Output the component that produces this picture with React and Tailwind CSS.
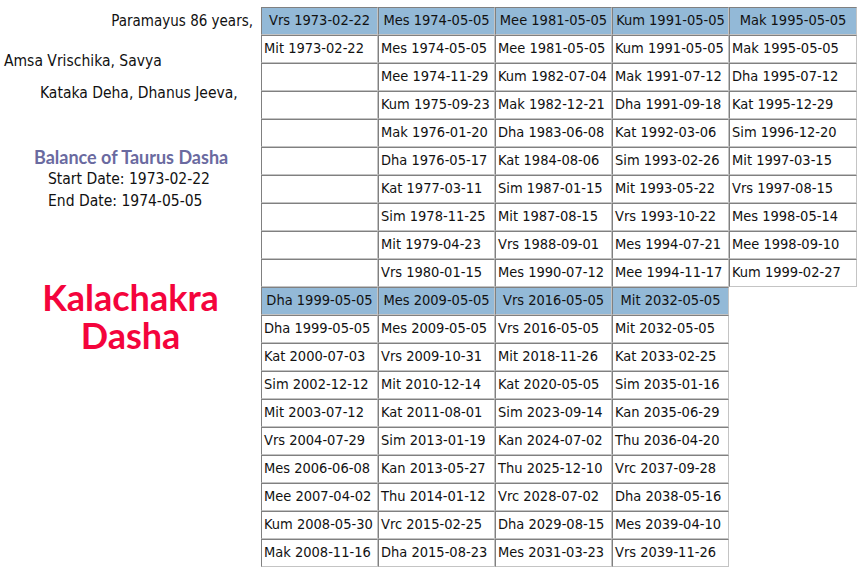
import React from 'react';

const tahoma = { fontFamily: '"DejaVu Sans Condensed", "DejaVu Sans", sans-serif', fontStretch: 'condensed' };

const topTable = {
  heads: ['Vrs 1973-02-22', 'Mes 1974-05-05', 'Mee 1981-05-05', 'Kum 1991-05-05', 'Mak 1995-05-05'],
  cols: [
    ['Mit 1973-02-22', '', '', '', '', '', '', '', ''],
    ['Mes 1974-05-05', 'Mee 1974-11-29', 'Kum 1975-09-23', 'Mak 1976-01-20', 'Dha 1976-05-17', 'Kat 1977-03-11', 'Sim 1978-11-25', 'Mit 1979-04-23', 'Vrs 1980-01-15'],
    ['Mee 1981-05-05', 'Kum 1982-07-04', 'Mak 1982-12-21', 'Dha 1983-06-08', 'Kat 1984-08-06', 'Sim 1987-01-15', 'Mit 1987-08-15', 'Vrs 1988-09-01', 'Mes 1990-07-12'],
    ['Kum 1991-05-05', 'Mak 1991-07-12', 'Dha 1991-09-18', 'Kat 1992-03-06', 'Sim 1993-02-26', 'Mit 1993-05-22', 'Vrs 1993-10-22', 'Mes 1994-07-21', 'Mee 1994-11-17'],
    ['Mak 1995-05-05', 'Dha 1995-07-12', 'Kat 1995-12-29', 'Sim 1996-12-20', 'Mit 1997-03-15', 'Vrs 1997-08-15', 'Mes 1998-05-14', 'Mee 1998-09-10', 'Kum 1999-02-27'],
  ],
};

const bottomTable = {
  heads: ['Dha 1999-05-05', 'Mes 2009-05-05', 'Vrs 2016-05-05', 'Mit 2032-05-05'],
  cols: [
    ['Dha 1999-05-05', 'Kat 2000-07-03', 'Sim 2002-12-12', 'Mit 2003-07-12', 'Vrs 2004-07-29', 'Mes 2006-06-08', 'Mee 2007-04-02', 'Kum 2008-05-30', 'Mak 2008-11-16'],
    ['Mes 2009-05-05', 'Vrs 2009-10-31', 'Mit 2010-12-14', 'Kat 2011-08-01', 'Sim 2013-01-19', 'Kan 2013-05-27', 'Thu 2014-01-12', 'Vrc 2015-02-25', 'Dha 2015-08-23'],
    ['Vrs 2016-05-05', 'Mit 2018-11-26', 'Kat 2020-05-05', 'Sim 2023-09-14', 'Kan 2024-07-02', 'Thu 2025-12-10', 'Vrc 2028-07-02', 'Dha 2029-08-15', 'Mes 2031-03-23'],
    ['Mit 2032-05-05', 'Kat 2033-02-25', 'Sim 2035-01-16', 'Kan 2035-06-29', 'Thu 2036-04-20', 'Vrc 2037-09-28', 'Dha 2038-05-16', 'Mes 2039-04-10', 'Vrs 2039-11-26'],
  ],
};

const cell = 'h-[28px] flex items-center border border-t-[#808080] border-l-[#808080] border-r-[#c4c4c4] border-b-[#c4c4c4] whitespace-nowrap';

const DashaTable = ({ data, gridClass }) => (
  <div className={`grid ${gridClass} text-[14.5px] text-[#111]`} style={tahoma}>
    {data.heads.map((h) => (
      <div key={h} className={`${cell} justify-center bg-[#93b9d7]`}>{h}</div>
    ))}
    {data.cols[0].map((_, r) =>
      data.cols.map((col, c) => (
        <div key={`${r}-${c}`} className={`${cell} pl-[2px]`}>{col[r]}</div>
      ))
    )}
  </div>
);

export default function App() {
  return (
    <div className="w-[864px] h-[576px] bg-white flex overflow-hidden">
      {/* left side notes */}
      <div className="w-[261px] shrink-0 flex flex-col text-[15.5px] text-[#111]" style={tahoma}>
        <div className="mt-[12px] h-[18px] leading-[18px] text-right pr-[8px] text-[15px]">Paramayus 86 years,</div>
        <div className="mt-[22px] h-[18px] leading-[18px] pl-[4px]">Amsa Vrischika, Savya</div>
        <div className="mt-[14px] h-[18px] leading-[18px] pl-[40px]">Kataka Deha, Dhanus Jeeva,</div>
        <div className="mt-[45px] h-5 leading-5 pl-[34px] font-bold text-[18px] text-[#6a6aa0] font-['Lato',sans-serif]">
          Balance of Taurus Dasha
        </div>
        <div className="mt-[1px] h-[22px] leading-[22px] pl-[48px]">Start Date: 1973-02-22</div>
        <div className="h-[22px] leading-[22px] pl-[48px]">End Date: 1974-05-05</div>
        <div className="mt-[66px] text-center font-['Lato',sans-serif] font-bold text-[36px] leading-[38px] text-[#f4043c]">
          Kalachakra
          <br />
          Dasha
        </div>
      </div>

      {/* dasha tables */}
      <div className="pt-[7px] flex flex-col">
        <DashaTable data={topTable} gridClass="grid-cols-[117px_117px_117px_117px_128px]" />
        <DashaTable data={bottomTable} gridClass="grid-cols-[117px_117px_117px_117px] w-max" />
      </div>
    </div>
  );
}
